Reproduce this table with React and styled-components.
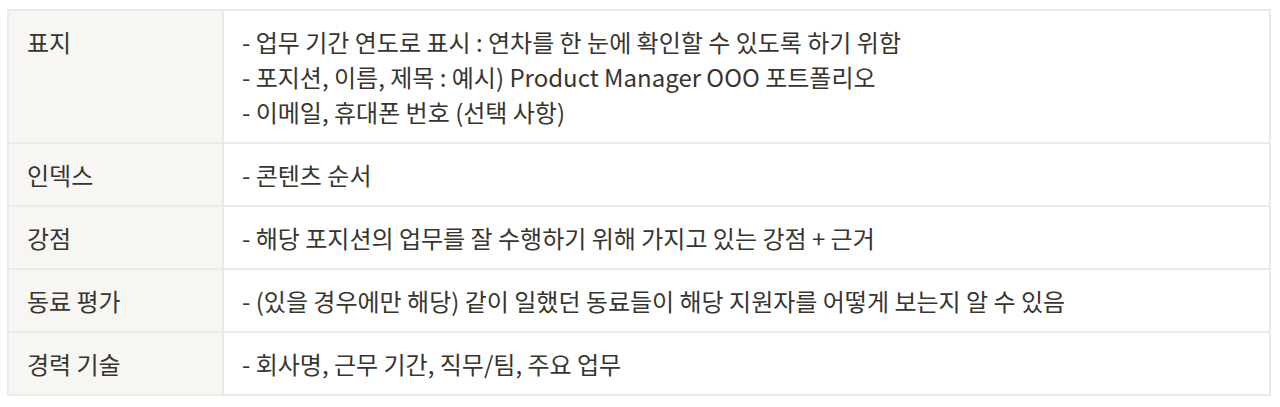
import styled, { createGlobalStyle } from "styled-components";

const GlobalStyle = createGlobalStyle`
  body {
    margin: 0;
    background: #ffffff;
    font-family: "Noto Sans CJK KR", "Noto Sans", sans-serif;
    color: #37352f;
  }
`;

const Page = styled.div`
  padding: 9px 9px 0 7px;
`;

const Table = styled.table`
  width: 100%;
  border-collapse: collapse;
  table-layout: fixed;
  font-size: 24px;
  line-height: 35px;
`;

const Cell = styled.td`
  box-sizing: border-box;
  border: 2px solid #ebeae8;
  padding: 13px 17px 13px 18px;
  vertical-align: top;
  background: ${(props) => (props.$head ? "#f7f6f3" : "#ffffff")};
  width: ${(props) => (props.$head ? "215px" : "auto")};
`;

const Line = styled.div`
  white-space: nowrap;
`;

const rows = [
  {
    title: "표지",
    lines: [
      "- 업무 기간 연도로 표시 : 연차를 한 눈에 확인할 수 있도록 하기 위함",
      "- 포지션, 이름, 제목 : 예시) Product Manager OOO 포트폴리오",
      "- 이메일, 휴대폰 번호 (선택 사항)",
    ],
  },
  { title: "인덱스", lines: ["- 콘텐츠 순서"] },
  {
    title: "강점",
    lines: ["- 해당 포지션의 업무를 잘 수행하기 위해 가지고 있는 강점 + 근거"],
  },
  {
    title: "동료 평가",
    lines: [
      "- (있을 경우에만 해당) 같이 일했던 동료들이 해당 지원자를 어떻게 보는지 알 수 있음",
    ],
  },
  { title: "경력 기술", lines: ["- 회사명, 근무 기간, 직무/팀, 주요 업무"] },
];

export default function App() {
  return (
    <Page>
      <GlobalStyle />
      <Table>
        <tbody>
          {rows.map((row) => (
            <tr key={row.title}>
              <Cell $head>{row.title}</Cell>
              <Cell>
                {row.lines.map((line) => (
                  <Line key={line}>{line}</Line>
                ))}
              </Cell>
            </tr>
          ))}
        </tbody>
      </Table>
    </Page>
  );
}
